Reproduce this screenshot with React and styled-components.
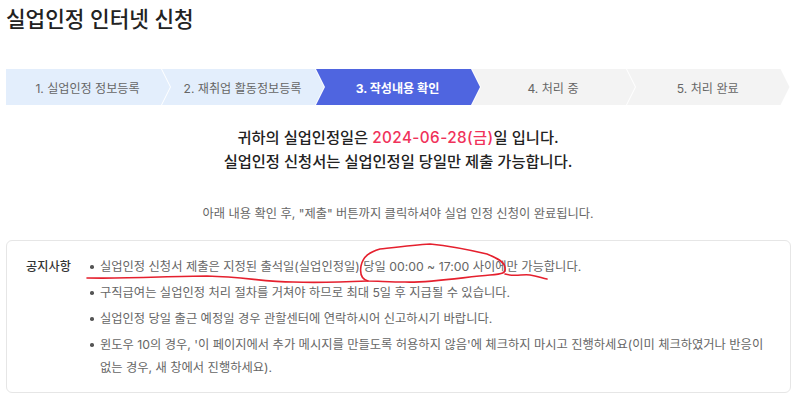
import React from "react";
import styled, { createGlobalStyle } from "styled-components";

const Global = createGlobalStyle`
  html, body { margin: 0; padding: 0; background: #fff; }
  body { font-family: Inter, "Noto Sans CJK KR", "Noto Sans", sans-serif; width: 800px; height: 403px; overflow: hidden; }
`;

const Page = styled.main`
  position: relative;
  width: 800px;
  height: 403px;
  padding: 4px 0 0 6px;
  box-sizing: border-box;
  overflow: hidden;
`;

const Title = styled.h1`
  margin: 0;
  font-size: 21.3px;
  line-height: 30px;
  font-weight: 500;
  color: #222;
`;

const Stepper = styled.ol`
  display: flex;
  list-style: none;
  width: 784px;
  height: 36px;
  margin: 35px 0 0;
  padding: 0;
`;

const StepSlot = styled.li`
  flex: 0 0 ${(p) => p.$w}px;
  margin-right: -9px;
  z-index: ${(p) => 10 - p.$i};
`;

const StepShape = styled.div`
  position: relative;
  height: 36px;
  background: #fff;
  clip-path: polygon(0 0, calc(100% - 9px) 0, 100% 50%, calc(100% - 9px) 100%, 0 100%);
  &::before {
    content: "";
    position: absolute;
    inset: 0 1px 0 0;
    background: ${(p) => p.$bg};
    clip-path: polygon(0 0, calc(100% - 9px) 0, 100% 50%, calc(100% - 9px) 100%, 0 100%);
  }
`;

const StepLabel = styled.span`
  position: relative;
  display: flex;
  align-items: center;
  justify-content: center;
  height: 100%;
  padding-right: 2px;
  font-size: 12.1px;
  font-weight: ${(p) => (p.$active ? 700 : 400)};
  color: ${(p) => (p.$active ? "#fff" : "#666")};
`;

const Summary = styled.section`
  margin: 21px 10px 0 0;
  text-align: center;
  font-size: 15.3px;
  line-height: 24px;
  font-weight: 500;
  color: #222;
`;

const Highlight = styled.span`
  color: #f0325a;
  letter-spacing: 0.4px;
`;

const Hint = styled.p`
  margin: 31px 10px 0 0;
  text-align: center;
  font-size: 12.25px;
  line-height: 18px;
  color: #666;
`;

const Notice = styled.section`
  display: flex;
  width: 785px;
  margin: 17px 0 0;
  padding: 14px 0 13px 19px;
  box-sizing: border-box;
  border: 1px solid #e6e6e6;
  border-radius: 6px;
`;

const NoticeLabel = styled.h2`
  flex: 0 0 64px;
  margin: 0;
  font-size: 12.2px;
  line-height: 23px;
  font-weight: 500;
  color: #333;
`;

const NoticeList = styled.ul`
  flex: 1;
  list-style: none;
  margin: 0;
  padding: 0 20px 0 0;
`;

const NoticeItem = styled.li`
  position: relative;
  padding-left: 10px;
  margin-bottom: 3px;
  font-size: 12.27px;
  line-height: 23px;
  color: #666;
  &:last-child { margin-bottom: 0; }
  &::before {
    content: "";
    position: absolute;
    left: 0;
    top: 10px;
    width: 3.5px;
    height: 3.5px;
    border-radius: 50%;
    background: #555;
  }
`;

const Scribble = styled.svg`
  position: absolute;
  inset: 0;
  width: 800px;
  height: 403px;
  pointer-events: none;
`;

const steps = [
  { label: "1. 실업인정 정보등록", w: 165, bg: "#e3eefc" },
  { label: "2. 재취업 활동정보등록", w: 163, bg: "#e3eefc" },
  { label: "3. 작성내용 확인", w: 165, bg: "#4f65e0", active: true },
  { label: "4. 처리 중", w: 164, bg: "#f3f3f3" },
  { label: "5. 처리 완료", w: 163.5, bg: "#f3f3f3" },
];

const notices = [
  "실업인정 신청서 제출은 지정된 출석일(실업인정일) 당일 00:00 ~ 17:00 사이에만 가능합니다.",
  "구직급여는 실업인정 처리 절차를 거쳐야 하므로 최대 5일 후 지급될 수 있습니다.",
  "실업인정 당일 출근 예정일 경우 관할센터에 연락하시어 신고하시기 바랍니다.",
  "윈도우 10의 경우, '이 페이지에서 추가 메시지를 만들도록 허용하지 않음'에 체크하지 마시고 진행하세요(이미 체크하였거나 반응이 없는 경우, 새 창에서 진행하세요).",
];

export default function App() {
  return (
    <Page>
      <Global />
      <Title>실업인정 인터넷 신청</Title>
      <Stepper>
        {steps.map((s, i) => (
          <StepSlot key={s.label} $w={s.w} $i={i}>
            <StepShape $bg={s.bg}>
              <StepLabel $active={s.active}>{s.label}</StepLabel>
            </StepShape>
          </StepSlot>
        ))}
      </Stepper>
      <Summary>
        <div>귀하의 실업인정일은 <Highlight>2024-06-28(금)</Highlight>일 입니다.</div>
        <div>실업인정 신청서는 실업인정일 당일만 제출 가능합니다.</div>
      </Summary>
      <Hint>아래 내용 확인 후, "제출" 버튼까지 클릭하셔야 실업 인정 신청이 완료됩니다.</Hint>
      <Notice>
        <NoticeLabel>공지사항</NoticeLabel>
        <NoticeList>
          {notices.map((n) => (
            <NoticeItem key={n}>{n}</NoticeItem>
          ))}
        </NoticeList>
      </Notice>
      <Scribble viewBox="0 0 800 403" fill="none" stroke="#e5202e" strokeWidth="1.6" strokeLinecap="round" strokeLinejoin="round">
        <path d="M87 278 C130 279 170 276 207 276 C245 277 265 282 293 282 C320 283 345 282 368 281" />
        <path d="M368 281 C360 279 360 272 361 266 C363 256 370 252 380 249 C398 247 415 245 430 244 C450 246 470 250 487 254 C497 258 505 262 505 268 C506 273 503 274 490 275 C465 277 430 283 405 282 C390 282 378 281 368 281" />
        <path d="M505 274 C515 277 522 274 530 275 C537 276 542 278 547 279" />
      </Scribble>
    </Page>
  );
}
